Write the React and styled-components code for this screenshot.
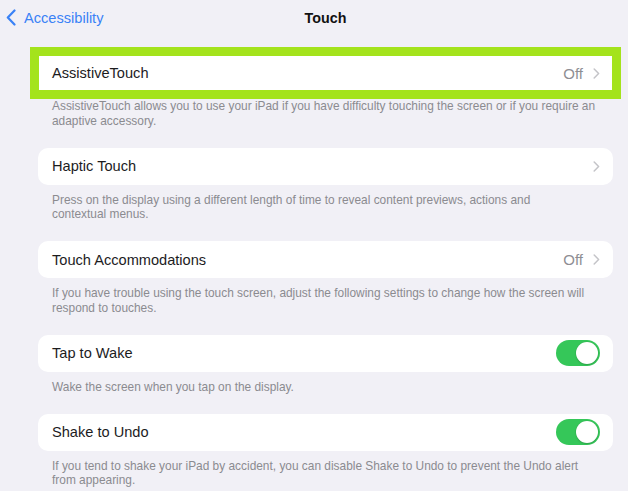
import React from "react";
import styled, { createGlobalStyle } from "styled-components";

const GlobalStyle = createGlobalStyle`
  html, body {
    margin: 0;
    padding: 0;
    background: #f1f0f6;
  }
  body {
    font-family: "Liberation Sans", Arial, sans-serif;
    -webkit-font-smoothing: antialiased;
  }
`;

const Page = styled.div`
  width: 628px;
  height: 491px;
  overflow: hidden;
  background: #f1f0f6;
`;

const Header = styled.header`
  display: grid;
  grid-template-columns: 1fr auto 1fr;
  align-items: center;
  height: 35px;
  padding: 0 6px;
`;

const Back = styled.a`
  display: flex;
  align-items: center;
  gap: 8px;
  color: #3a82f6;
  font-size: 14.6px;
  text-decoration: none;
`;

const Title = styled.h1`
  margin: 0;
  padding-left: 23px;
  font-size: 14.3px;
  font-weight: 700;
  color: #111;
`;

const List = styled.div`
  display: flex;
  flex-direction: column;
  padding: 20px 15px 0 38px;
`;

const Group = styled.section`
  display: flex;
  flex-direction: column;
  margin-bottom: 19.5px;
`;

const Card = styled.div`
  display: flex;
  align-items: center;
  justify-content: space-between;
  height: ${(p) => (p.$highlight ? "36px" : "37px")};
  padding: 0 13px 0 14px;
  background: #fff;
  border-radius: ${(p) => (p.$highlight ? "0" : "10px")};
  outline: ${(p) => (p.$highlight ? "9px solid #a4e31c" : "none")};
  outline-offset: -1px;
  box-sizing: border-box;
`;

const Label = styled.span`
  font-size: 14.6px;
  color: #1c1c1e;
`;

const Accessory = styled.span`
  display: flex;
  align-items: center;
  gap: 10px;
  color: #8e8e93;
  font-size: 15px;
`;

const Note = styled.p`
  margin: 0;
  padding: 8px 14px 0;
  font-size: 11.9px;
  line-height: 14.5px;
  color: #8b8b90;
  white-space: nowrap;
`;

const Track = styled.span`
  display: flex;
  align-items: center;
  justify-content: ${(p) => (p.$on ? "flex-end" : "flex-start")};
  width: 44px;
  height: 26px;
  padding: 2px;
  border-radius: 13px;
  background: ${(p) => (p.$on ? "#35c759" : "#e5e5ea")};
  box-sizing: border-box;
`;

const Knob = styled.span`
  width: 22px;
  height: 22px;
  border-radius: 50%;
  background: #fff;
  box-shadow: 0 0 0 0.5px rgba(0, 0, 0, 0.08), 0 1px 2px rgba(0, 0, 0, 0.15);
`;

const Chevron = () => (
  <svg width="7" height="11" viewBox="0 0 7 11">
    <path d="M1.2 1 L5.6 5.5 L1.2 10" fill="none" stroke="#c4c4c8" strokeWidth="1.5" strokeLinecap="round" strokeLinejoin="round" />
  </svg>
);

const BackChevron = () => (
  <svg width="10" height="17" viewBox="0 0 10 17">
    <path d="M8.5 1.5 L1.8 8.5 L8.5 15.5" fill="none" stroke="#3a82f6" strokeWidth="2.2" strokeLinecap="round" strokeLinejoin="round" />
  </svg>
);

const Toggle = ({ on }) => (
  <Track $on={on}>
    <Knob />
  </Track>
);

const rows = [
  {
    label: "AssistiveTouch",
    value: "Off",
    link: true,
    highlight: true,
    note: [
      "AssistiveTouch allows you to use your iPad if you have difficulty touching the screen or if you require an",
      "adaptive accessory.",
    ],
  },
  {
    label: "Haptic Touch",
    link: true,
    note: [
      "Press on the display using a different length of time to reveal content previews, actions and",
      "contextual menus.",
    ],
  },
  {
    label: "Touch Accommodations",
    value: "Off",
    link: true,
    note: [
      "If you have trouble using the touch screen, adjust the following settings to change how the screen will",
      "respond to touches.",
    ],
  },
  {
    label: "Tap to Wake",
    toggle: true,
    note: ["Wake the screen when you tap on the display."],
  },
  {
    label: "Shake to Undo",
    toggle: true,
    note: [
      "If you tend to shake your iPad by accident, you can disable Shake to Undo to prevent the Undo alert",
      "from appearing.",
    ],
  },
];

export default function App() {
  return (
    <Page>
      <GlobalStyle />
      <Header>
        <Back href="#">
          <BackChevron />
          Accessibility
        </Back>
        <Title>Touch</Title>
        <span />
      </Header>
      <List>
        {rows.map((row) => (
          <Group key={row.label}>
            <Card $highlight={row.highlight}>
              <Label>{row.label}</Label>
              {row.toggle ? (
                <Toggle on />
              ) : (
                <Accessory>
                  {row.value}
                  {row.link && <Chevron />}
                </Accessory>
              )}
            </Card>
            <Note>
              {row.note.map((line, i) => (
                <React.Fragment key={i}>
                  {i > 0 && <br />}
                  {line}
                </React.Fragment>
              ))}
            </Note>
          </Group>
        ))}
      </List>
    </Page>
  );
}
